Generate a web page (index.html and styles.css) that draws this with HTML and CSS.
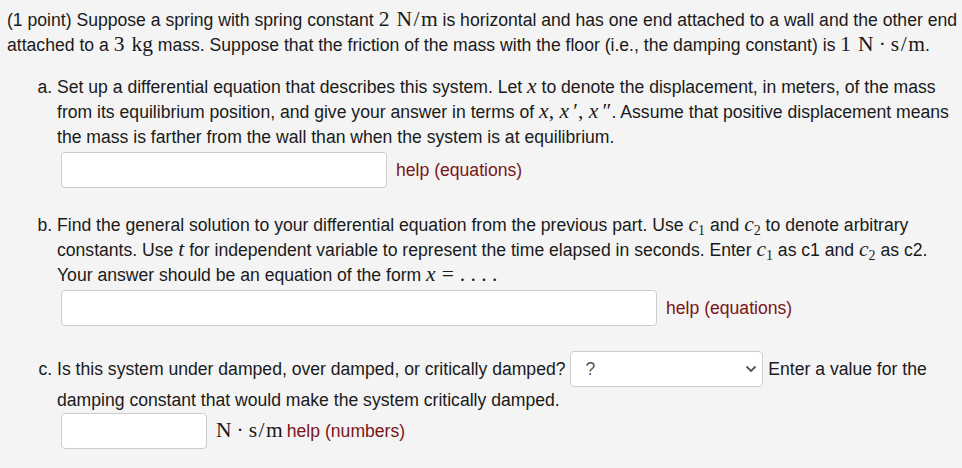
FILE: index.html
```html
<!DOCTYPE html>
<html>
<head>
<meta charset="utf-8">
<link rel="stylesheet" href="styles.css">
</head>
<body>
<div class="problem">
  <p class="intro">(1 point) Suppose a spring with spring constant <span class="m">2<span class="sp"></span>N<span class="sl">/</span>m</span> is horizontal and has one end attached to a wall and the other end attached to a <span class="m">3<span class="sp"></span>kg</span> mass. Suppose that the friction of the mass with the floor (i.e., the damping constant) is <span class="m">1<span class="sp"></span>N<span class="dot">·</span>s<span class="sl">/</span>m</span>.</p>
  <ol class="parts">
    <li class="part">
      <p class="ptext">Set up a differential equation that describes this system. Let <span class="m"><i>x</i></span> to denote the displacement, in meters, of the mass from its equilibrium position, and give your answer in terms of <span class="m"><i>x</i>, <i>x</i>&thinsp;′, <i>x</i>&thinsp;″</span>. Assume that positive displacement means the mass is farther from the wall than when the system is at equilibrium.</p>
      <div class="answer"><span class="box box-a"></span><span class="help">help (equations)</span></div>
    </li>
    <li class="part">
      <p class="ptext">Find the general solution to your differential equation from the previous part. Use <span class="m"><i>c</i><sub>1</sub></span> and <span class="m"><i>c</i><sub>2</sub></span> to denote arbitrary constants. Use <span class="m"><i>t</i></span> for independent variable to represent the time elapsed in seconds. Enter <span class="m"><i>c</i><sub>1</sub></span> as c1 and <span class="m"><i>c</i><sub>2</sub></span> as c2. Your answer should be an equation of the form <span class="m"><i>x</i><span class="eq">=</span>. . . .</span></p>
      <div class="answer"><span class="box box-b"></span><span class="help">help (equations)</span></div>
    </li>
    <li class="part part-c">
      <p class="ptext tall">Is this system under damped, over damped, or critically damped? <span class="select"><span class="q">?</span><svg class="chev" width="12" height="8" viewBox="0 0 12 8"><path d="M1.5 1.5 L6 6 L10.5 1.5" fill="none" stroke="#555" stroke-width="1.8"/></svg></span> Enter a value for the damping constant that would make the system critically damped.</p>
      <div class="answer answer-c"><span class="box box-c"></span><span class="m unit">N<span class="dot">·</span>s<span class="sl">/</span>m</span><span class="help">help (numbers)</span></div>
    </li>
  </ol>
</div>
</body>
</html>
```

FILE: styles.css
```css
html, body {
  margin: 0;
  padding: 0;
  background: #f4f4f4;
}
body {
  font-family: "Liberation Sans", Arial, sans-serif;
  font-size: 17.6px;
  color: #1a1a1a;
}
.problem {
  padding: 8px 0 0 7px;
}
.intro {
  margin: 0;
  line-height: 25px;
}
.m {
  font-family: "Liberation Serif", "Times New Roman", serif;
  font-size: 21.5px;
  line-height: 1;
}
.m i {
  font-style: italic;
}
.m .sp {
  display: inline-block;
  width: 7px;
}
.m .sl {
  margin: 0 1.5px;
}
.m .dot {
  margin: 0 5px;
}
.m .eq {
  margin: 0 6px;
}
.m sub {
  font-size: 14px;
  font-style: normal;
  vertical-align: -4px;
  line-height: 0;
}
.parts {
  list-style: lower-alpha;
  margin: 17px 0 0 0;
  padding-left: 50px;
}
.part {
  margin-bottom: 25px;
}
.ptext {
  margin: 0;
  line-height: 25px;
}
.ptext.tall {
  line-height: 31px;
  padding-top: 3px;
}
.answer {
  display: flex;
  align-items: center;
  gap: 9px;
  margin: 2px 0 0 4px;
  line-height: 25px;
}
.answer-c {
  margin-top: -3px;
}
.box {
  display: inline-block;
  height: 34px;
  background: #fff;
  border: 1px solid #ccc;
  border-radius: 4px;
  box-sizing: content-box;
}
.box-a { width: 324px; }
.box-b { width: 594px; }
.box-c { width: 144px; }
.help {
  color: #7a1616;
}
.unit {
  margin-right: -5px;
}
.select {
  display: inline-flex;
  align-items: center;
  justify-content: space-between;
  width: 191px;
  height: 34px;
  box-sizing: content-box;
  padding: 0;
  background: #fff;
  border: 1px solid #ccc;
  border-radius: 4px;
  vertical-align: middle;
  margin: -6px 0 -4px 0;
}
.select .q {
  color: #555;
  padding-left: 14px;
}
.select .chev {
  margin-right: 5px;
}
```
